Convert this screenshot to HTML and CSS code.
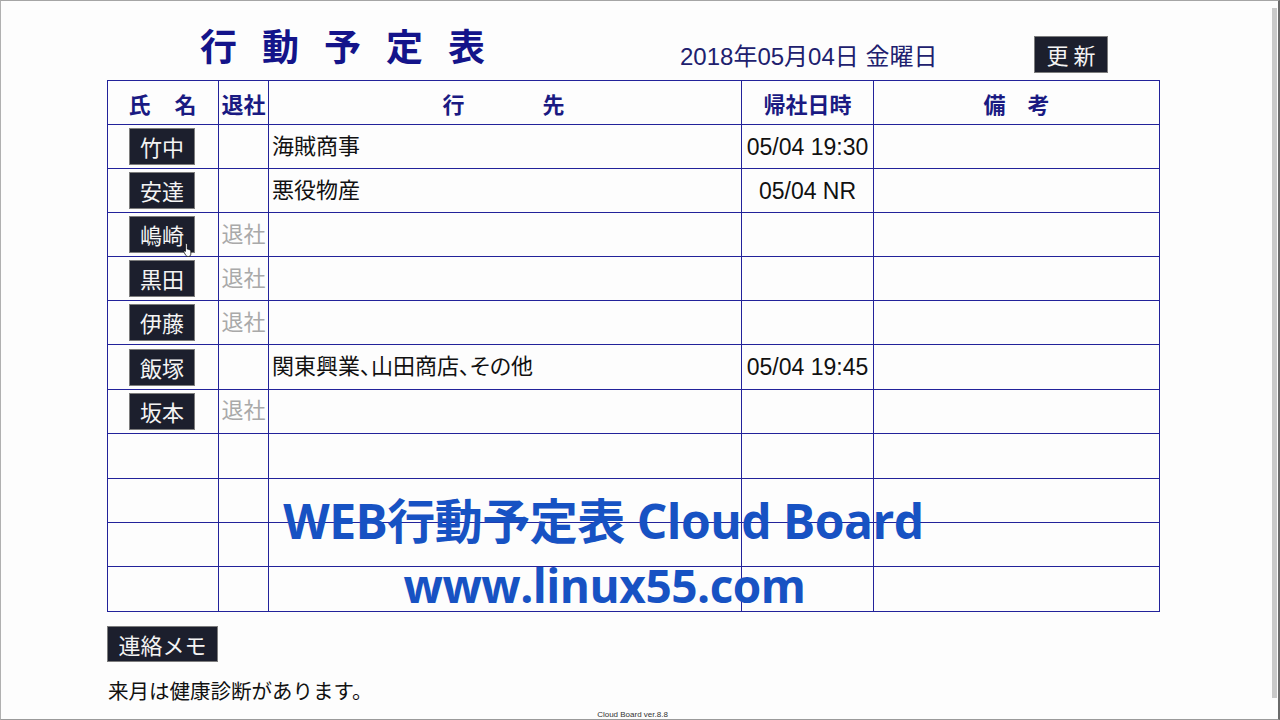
FILE: index.html
```html
<!DOCTYPE html>
<html lang="ja">
<head>
<meta charset="utf-8">
<title>行動予定表</title>
<link rel="stylesheet" href="styles.css">
</head>
<body>
<div class="window">
  <div class="page">
    <div class="topbar">
      <h1 class="title">行動予定表</h1>
      <div class="date">2018年05月04日 金曜日</div>
      <button class="btn btn-update">更 新</button>
    </div>
    <div class="board">
      <table class="sched">
        <colgroup>
          <col class="c-name"><col class="c-out"><col class="c-dest"><col class="c-ret"><col class="c-note">
        </colgroup>
        <thead>
          <tr><th class="h-name">氏　名</th><th>退社</th><th class="h-dest">行　　　先</th><th>帰社日時</th><th class="h-note">備　考</th></tr>
        </thead>
        <tbody>
          <tr><td class="name"><span class="btn btn-name">竹中</span></td><td class="out"></td><td class="dest">海賊商事</td><td class="ret">05/04 19:30</td><td></td></tr>
          <tr><td class="name"><span class="btn btn-name">安達</span></td><td class="out"></td><td class="dest">悪役物産</td><td class="ret">05/04 NR</td><td></td></tr>
          <tr><td class="name"><span class="btn btn-name">嶋崎<svg class="cursor" viewBox="0 0 12 18" width="10" height="16"><path d="M4 1.2c.7 0 1.1.5 1.1 1.1V8l.4-.1c.6-.2 1.1.1 1.3.6.6-.2 1.2.1 1.3.6.6-.2 1.3.2 1.3.9v3.8c0 1.7-1.2 3-2.8 3H5.8c-1 0-1.7-.4-2.3-1.2L1.2 11.7c-.4-.5-.3-1.1.2-1.4.5-.3 1-.2 1.4.2l.1.2V2.3c0-.6.4-1.1 1.1-1.1z" fill="#fff" stroke="#000" stroke-width="0.9"/></svg></span></td><td class="out">退社</td><td class="dest"></td><td class="ret"></td><td></td></tr>
          <tr><td class="name"><span class="btn btn-name">黒田</span></td><td class="out">退社</td><td class="dest"></td><td class="ret"></td><td></td></tr>
          <tr><td class="name"><span class="btn btn-name">伊藤</span></td><td class="out">退社</td><td class="dest"></td><td class="ret"></td><td></td></tr>
          <tr><td class="name"><span class="btn btn-name">飯塚</span></td><td class="out"></td><td class="dest">関東興業、山田商店、その他</td><td class="ret">05/04 19:45</td><td></td></tr>
          <tr><td class="name"><span class="btn btn-name">坂本</span></td><td class="out">退社</td><td class="dest"></td><td class="ret"></td><td></td></tr>
          <tr><td></td><td></td><td></td><td></td><td></td></tr>
          <tr><td></td><td></td><td></td><td></td><td></td></tr>
          <tr><td></td><td></td><td></td><td></td><td></td></tr>
          <tr><td></td><td></td><td></td><td></td><td></td></tr>
        </tbody>
      </table>
      <div class="watermark">
        <div class="wm1">WEB行動予定表 Cloud Board</div>
        <div class="wm2">www.linux55.com</div>
      </div>
    </div>
    <button class="btn btn-memo">連絡メモ</button>
    <p class="memo">来月は健康診断があります。</p>
    <div class="footer">Cloud Board ver.8.8</div>
  </div>
  <div class="scrollbar"></div>
</div>
</body>
</html>
```

FILE: styles.css
```css
html, body {
  margin: 0;
  padding: 0;
  background: #ffffff;
}

body {
  font-family: "Liberation Sans", "Noto Sans CJK JP", sans-serif;
  color: #111;
}

.window {
  position: relative;
  box-sizing: border-box;
  width: 1280px;
  height: 720px;
  border-top: 1px solid #a5a5a5;
  border-left: 1px solid #b0b0b0;
  border-right: 2px solid #6a6a6a;
  border-bottom: 1px solid #9a9a9a;
  overflow: hidden;
  background: #fdfdfd;
}

.page {
  margin-left: 106px;
  width: 1051px;
}

.topbar {
  display: flex;
  align-items: flex-start;
  height: 79px;
}

.title {
  margin: 26px 0 0 93px;
  font-family: "Noto Sans CJK JP", sans-serif;
  font-size: 37px;
  line-height: 37px;
  font-weight: 700;
  letter-spacing: 25px;
  color: #14148a;
}

.date {
  margin: 44px 0 0 170px;
  font-size: 24px;
  line-height: 24px;
  color: #20206e;
  white-space: nowrap;
}

.btn {
  display: inline-block;
  box-sizing: border-box;
  background: #1c1f2d;
  color: #f4f4f4;
  border: 1px solid #7d7d7d;
  font-family: "Noto Sans CJK JP", sans-serif;
  font-size: 22px;
  font-weight: 400;
  padding: 0;
  cursor: pointer;
}

.btn-update {
  margin: 35px 0 0 auto;
  margin-right: 50px;
  width: 74px;
  height: 37px;
  line-height: 33px;
  letter-spacing: 0;
}

.board {
  position: relative;
}

.sched {
  border-collapse: collapse;
  table-layout: fixed;
  width: 1052px;
}

.c-name { width: 111px; }
.c-out { width: 50px; }
.c-dest { width: 473px; }
.c-ret { width: 132px; }
.c-note { width: 286px; }

.sched th,
.sched td {
  border: 1px solid #22229a;
  padding: 0;
  height: 43px;
  vertical-align: middle;
  font-family: "Liberation Sans", "Noto Sans CJK JP", sans-serif;
  font-size: 22px;
  line-height: 24px;
  white-space: nowrap;
  overflow: visible;
}

.sched tbody tr:nth-child(n+5) td {
  height: 43.4px;
}

.sched th {
  font-family: "Noto Sans CJK JP", sans-serif;
  font-weight: 700;
  color: #1a1a82;
  text-align: center;
}

.h-name { letter-spacing: 1px; }
.h-dest { letter-spacing: 3px; }
.h-note { letter-spacing: 0; }

.name { text-align: center; }

.btn-name {
  position: relative;
  width: 66px;
  height: 37px;
  line-height: 34px;
  vertical-align: middle;
  margin-left: -2px;
}

.cursor {
  position: absolute;
  left: 53px;
  top: 25px;
  z-index: 2;
}

.out {
  text-align: center;
  color: #a9a9a9;
  font-family: "Noto Sans CJK JP", sans-serif;
}

.dest {
  padding-left: 3px !important;
  font-family: "Noto Sans CJK JP", sans-serif;
  font-feature-settings: "palt";
  color: #111;
}

.ret {
  text-align: center;
  font-size: 23px !important;
  color: #111;
}

.watermark {
  position: absolute;
  left: 0;
  right: 0;
  top: 408px;
  text-align: center;
  color: #1752c3;
  font-family: "Open Sans", "Noto Sans CJK JP", sans-serif;
  font-weight: 700;
  line-height: 65px;
  letter-spacing: -0.5px;
  pointer-events: none;
}

.wm1 {
  margin-left: -58px;
  font-size: 48px;
}

.wm2 {
  margin-left: -56px;
  font-size: 46px;
}

.btn-memo {
  display: block;
  margin-top: 14px;
  width: 111px;
  height: 36px;
  line-height: 32px;
  margin-left: 0;
}

.memo {
  margin: 15px 0 0 1px;
  font-family: "Noto Sans CJK JP", sans-serif;
  font-size: 20.5px;
  line-height: 26px;
  color: #111;
}

.footer {
  margin-top: 7px;
  text-align: center;
  font-size: 8px;
  line-height: 10px;
  color: #333;
}

.scrollbar {
  position: absolute;
  right: 1px;
  top: 7px;
  width: 5px;
  height: 690px;
  background: #c9c9c9;
}
```
